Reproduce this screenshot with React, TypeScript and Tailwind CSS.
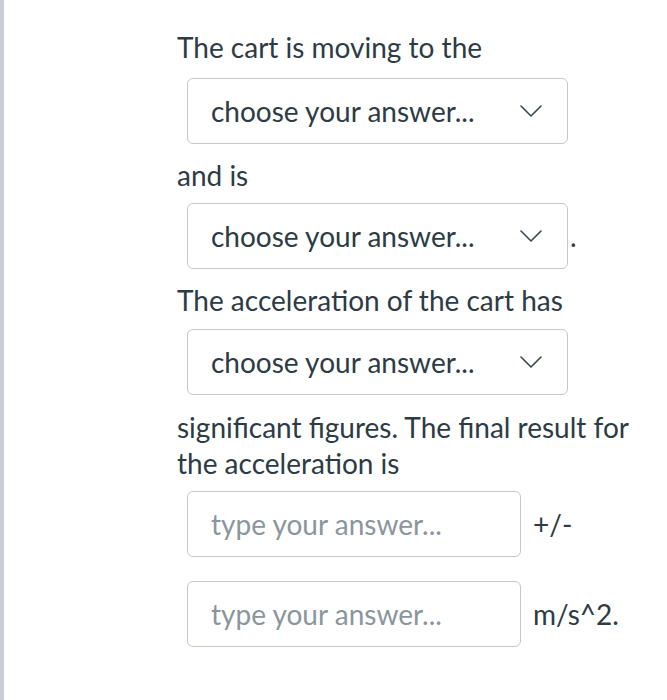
import React from "react";

const Chevron = () => (
  <svg width="22" height="12" viewBox="0 0 22 12" fill="none" className="shrink-0">
    <path d="M1 1 L11 11 L21 1" stroke="#3a4750" strokeWidth="1.6" strokeLinecap="round" strokeLinejoin="round" />
  </svg>
);

const Select = () => (
  <div className="flex h-[66px] w-[381px] items-center justify-between rounded-[6px] border border-[#c2c8cd] bg-white pl-[23px] pr-[25px]">
    <span className="text-[28px] text-[#2d3b45]">choose your answer...</span>
    <Chevron />
  </div>
);

const Input = () => (
  <div className="flex h-[66px] w-[334px] items-center rounded-[6px] border border-[#c2c8cd] bg-white pl-[23px]">
    <span className="text-[28px] text-[#8a959d]">type your answer...</span>
  </div>
);

export default function App() {
  return (
    <div className="flex min-h-[700px] bg-white" style={{ fontFamily: "Lato, 'Open Sans', sans-serif" }}>
      <div className="w-[4px] shrink-0 bg-[#c9ced6]" />
      <div className="flex flex-col pl-[173px] pt-[29px] text-[28px] leading-[36px] text-[#2d3b45]">
        <p>The cart is moving to the</p>
        <div className="ml-[10px] mt-[13px]">
          <Select />
        </div>
        <p className="mt-[13px]">and is</p>
        <div className="ml-[10px] mt-[10px] flex items-center">
          <Select />
          <span className="ml-[2px]">.</span>
        </div>
        <p className="mt-[13px]">The acceleration of the cart has</p>
        <div className="ml-[10px] mt-[11px]">
          <Select />
        </div>
        <p className="mt-[14px] w-[470px]">significant figures. The final result for the acceleration is</p>
        <div className="ml-[10px] mt-[10px] flex items-center">
          <Input />
          <span className="ml-[12px]">+/-</span>
        </div>
        <div className="ml-[10px] mt-[24px] flex items-center">
          <Input />
          <span className="ml-[12px]">m/s^2.</span>
        </div>
      </div>
    </div>
  );
}
